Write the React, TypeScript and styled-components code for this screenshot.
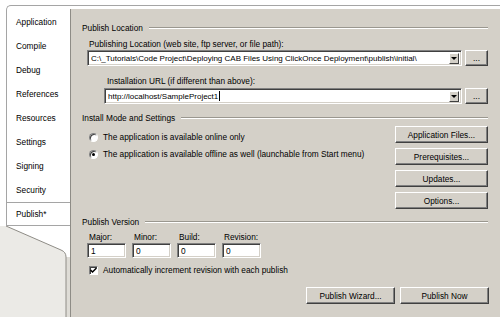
import React from 'react';
import styled, { createGlobalStyle } from 'styled-components';

const GlobalStyle = createGlobalStyle`
  html, body {
    margin: 0;
    padding: 0;
    background: #ffffff;
  }
  body {
    font-family: "Liberation Sans", Arial, sans-serif;
    font-size: 8.3px;
    color: #000000;
  }
`;

const tabs = [
  'Application',
  'Compile',
  'Debug',
  'References',
  'Resources',
  'Settings',
  'Signing',
  'Security',
  'Publish*',
];

const Root = styled.div`
  display: flex;
  width: 500px;
  height: 317px;
  overflow: hidden;
  padding-top: 5px;
  box-sizing: border-box;
  background: #ffffff;
`;

const Sidebar = styled.div`
  display: flex;
  flex-direction: column;
  width: 70px;
  flex: none;
`;

const TabList = styled.div`
  margin-left: 6px;
  padding-top: 4px;
  border-top: 1px solid #a5a5a5;
  border-left: 1px solid #a5a5a5;
  border-top-left-radius: 5px;
  background: #ffffff;
`;

const Tab = styled.div<{ $active?: boolean }>`
  height: 24px;
  box-sizing: border-box;
  display: flex;
  align-items: center;
  padding-left: 9px;
  border-top: 1px solid ${(p) => (p.$active ? '#a5a5a5' : 'transparent')};
  border-bottom: 1px solid ${(p) => (p.$active ? '#a5a5a5' : 'transparent')};
`;

const Tail = styled.div`
  flex: 1;
  overflow: hidden;
`;

const Main = styled.div`
  flex: 1;
  display: flex;
  flex-direction: column;
  border-top: 1px solid #a5a5a5;
  padding-top: 3px;
`;

const Panel = styled.div`
  flex: 1;
  background: #d4d0c8;
  border-left: 1px solid #8e8c86;
  padding: 14px 12px 0 11px;
  display: flex;
  flex-direction: column;
`;

const GroupHeader = styled.div<{ $top: number }>`
  display: flex;
  align-items: center;
  height: 10px;
  margin-top: ${(p) => p.$top}px;
`;

const GroupLine = styled.div`
  flex: 1;
  margin-left: 6px;
  border-top: 1px solid #9a978f;
  border-bottom: 1px solid #ffffff;
`;

const Label = styled.div<{ $indent: number; $top: number }>`
  height: 10px;
  line-height: 10px;
  margin-left: ${(p) => p.$indent}px;
  margin-top: ${(p) => p.$top}px;
  white-space: nowrap;
`;

const FieldRow = styled.div<{ $indent: number; $top: number }>`
  display: flex;
  gap: 3px;
  height: 16px;
  margin-left: ${(p) => p.$indent}px;
  margin-top: ${(p) => p.$top}px;
`;

const Combo = styled.div`
  flex: 1;
  display: flex;
  align-items: center;
  box-sizing: border-box;
  background: #ffffff;
  border: 1px solid;
  border-color: #808080 #ffffff #ffffff #808080;
  box-shadow: inset 1px 1px 0 #404040, inset -1px -1px 0 #d4d0c8;
  padding: 0 2px 0 3px;
  overflow: hidden;
`;

const ComboText = styled.div`
  flex: 1;
  font-size: 8px;
  white-space: nowrap;
  overflow: hidden;
  display: flex;
  align-items: center;
`;

const Caret = styled.span`
  display: inline-block;
  width: 1px;
  height: 10px;
  background: #000000;
  margin-left: 1px;
`;

const DropButton = styled.div`
  width: 10px;
  height: 11px;
  box-sizing: border-box;
  background: #d4d0c8;
  border: 1px solid;
  border-color: #ffffff #404040 #404040 #ffffff;
  display: flex;
  align-items: center;
  justify-content: center;
`;

const Arrow = styled.div`
  width: 0;
  height: 0;
  border-left: 3px solid transparent;
  border-right: 3px solid transparent;
  border-top: 3px solid #000000;
`;

const Button = styled.div<{ $width: number; $height?: number }>`
  width: ${(p) => p.$width}px;
  height: ${(p) => p.$height ?? 17}px;
  box-sizing: border-box;
  background: #d4d0c8;
  border: 1px solid;
  border-color: #ffffff #404040 #404040 #ffffff;
  box-shadow: inset -1px -1px 0 #808080;
  display: flex;
  align-items: center;
  justify-content: center;
  white-space: nowrap;
  flex: none;
`;

const ModeBody = styled.div`
  display: flex;
  justify-content: space-between;
`;

const Radios = styled.div`
  display: flex;
  flex-direction: column;
  gap: 7px;
  margin-top: 9px;
  margin-left: 7px;
`;

const OptionRow = styled.div`
  display: flex;
  align-items: center;
  height: 10px;
  gap: 5px;
  white-space: nowrap;
`;

const Radio = styled.span<{ $checked?: boolean }>`
  position: relative;
  width: 9px;
  height: 9px;
  box-sizing: border-box;
  border-radius: 50%;
  background: #ffffff;
  border: 1px solid;
  border-color: #808080 #ffffff #ffffff #808080;
  box-shadow: inset 1px 1px 0 #404040;
  flex: none;

  &::after {
    content: '';
    display: ${(p) => (p.$checked ? 'block' : 'none')};
    position: absolute;
    left: 2px;
    top: 2px;
    width: 3px;
    height: 3px;
    border-radius: 50%;
    background: #000000;
  }
`;

const ButtonColumn = styled.div`
  display: flex;
  flex-direction: column;
  gap: 5px;
  margin-top: 3px;
`;

const VersionGrid = styled.div`
  display: grid;
  grid-template-columns: repeat(4, 39px);
  column-gap: 6px;
  row-gap: 1px;
  margin-top: 5px;
  margin-left: 5px;
`;

const VersionLabel = styled.div`
  height: 10px;
  line-height: 10px;
  padding-left: 2px;
`;

const VersionField = styled.div`
  height: 15px;
  box-sizing: border-box;
  background: #ffffff;
  border: 1px solid;
  border-color: #808080 #ffffff #ffffff #808080;
  box-shadow: inset 1px 1px 0 #404040, inset -1px -1px 0 #d4d0c8;
  padding-left: 3px;
  display: flex;
  align-items: center;
`;

const CheckRow = styled(OptionRow)`
  margin-top: 7px;
  margin-left: 7px;
`;

const CheckBox = styled.span`
  width: 9px;
  height: 9px;
  box-sizing: border-box;
  background: #ffffff;
  border: 1px solid;
  border-color: #808080 #ffffff #ffffff #808080;
  box-shadow: inset 1px 1px 0 #404040;
  display: flex;
  align-items: center;
  justify-content: center;
  flex: none;
`;

const Footer = styled.div`
  display: flex;
  justify-content: flex-end;
  gap: 5px;
  margin-top: 12px;
  margin-right: -1px;
`;

const App: React.FC = () => {
  return (
    <Root>
      <GlobalStyle />
      <Sidebar>
        <TabList>
          {tabs.map((t) => (
            <Tab key={t} $active={t === 'Publish*'}>
              {t}
            </Tab>
          ))}
        </TabList>
        <Tail>
          <svg width="70" height="95" viewBox="0 0 70 95">
            <rect x="0" y="0" width="70" height="95" fill="#ffffff" />
            <path d="M0 0 H6 L61 24 Q66 26 66 31 V95 H0 Z" fill="#ebeae6" />
            <rect x="66" y="31" width="4" height="64" fill="#dedcd6" />
            <path
              d="M6 0 L61 24 Q66 26 66 31 V95"
              fill="none"
              stroke="#8e8c86"
              strokeWidth="1"
            />
          </svg>
        </Tail>
      </Sidebar>
      <Main>
        <Panel>
          <GroupHeader $top={0}>
            Publish Location
            <GroupLine />
          </GroupHeader>
          <Label $indent={7} $top={6}>
            Publishing Location (web site, ftp server, or file path):
          </Label>
          <FieldRow $indent={5} $top={1}>
            <Combo>
              <ComboText>
                C:\_Tutorials\Code Project\Deploying CAB Files Using ClickOnce
                Deployment\publish\initial\
              </ComboText>
              <DropButton>
                <Arrow />
              </DropButton>
            </Combo>
            <Button $width={23} $height={16}>
              ...
            </Button>
          </FieldRow>
          <Label $indent={25} $top={10}>
            Installation URL (if different than above):
          </Label>
          <FieldRow $indent={22} $top={2}>
            <Combo>
              <ComboText>
                http://localhost/SampleProject1
                <Caret />
              </ComboText>
              <DropButton>
                <Arrow />
              </DropButton>
            </Combo>
            <Button $width={23} $height={16}>
              ...
            </Button>
          </FieldRow>

          <GroupHeader $top={9}>
            Install Mode and Settings
            <GroupLine />
          </GroupHeader>
          <ModeBody>
            <Radios>
              <OptionRow>
                <Radio />
                The application is available online only
              </OptionRow>
              <OptionRow>
                <Radio $checked />
                The application is available offline as well (launchable from
                Start menu)
              </OptionRow>
            </Radios>
            <ButtonColumn>
              <Button $width={93}>Application Files...</Button>
              <Button $width={93}>Prerequisites...</Button>
              <Button $width={93}>Updates...</Button>
              <Button $width={93}>Options...</Button>
            </ButtonColumn>
          </ModeBody>

          <GroupHeader $top={8}>
            Publish Version
            <GroupLine />
          </GroupHeader>
          <VersionGrid>
            <VersionLabel>Major:</VersionLabel>
            <VersionLabel>Minor:</VersionLabel>
            <VersionLabel>Build:</VersionLabel>
            <VersionLabel>Revision:</VersionLabel>
            <VersionField>1</VersionField>
            <VersionField>0</VersionField>
            <VersionField>0</VersionField>
            <VersionField>0</VersionField>
          </VersionGrid>
          <CheckRow>
            <CheckBox>
              <svg width="7" height="7" viewBox="0 0 7 7">
                <path
                  d="M0.5 3 L2.5 5 L6.5 1"
                  fill="none"
                  stroke="#000000"
                  strokeWidth="1.5"
                />
              </svg>
            </CheckBox>
            Automatically increment revision with each publish
          </CheckRow>
          <Footer>
            <Button $width={89}>Publish Wizard...</Button>
            <Button $width={89}>Publish Now</Button>
          </Footer>
        </Panel>
      </Main>
    </Root>
  );
};

export default App;
